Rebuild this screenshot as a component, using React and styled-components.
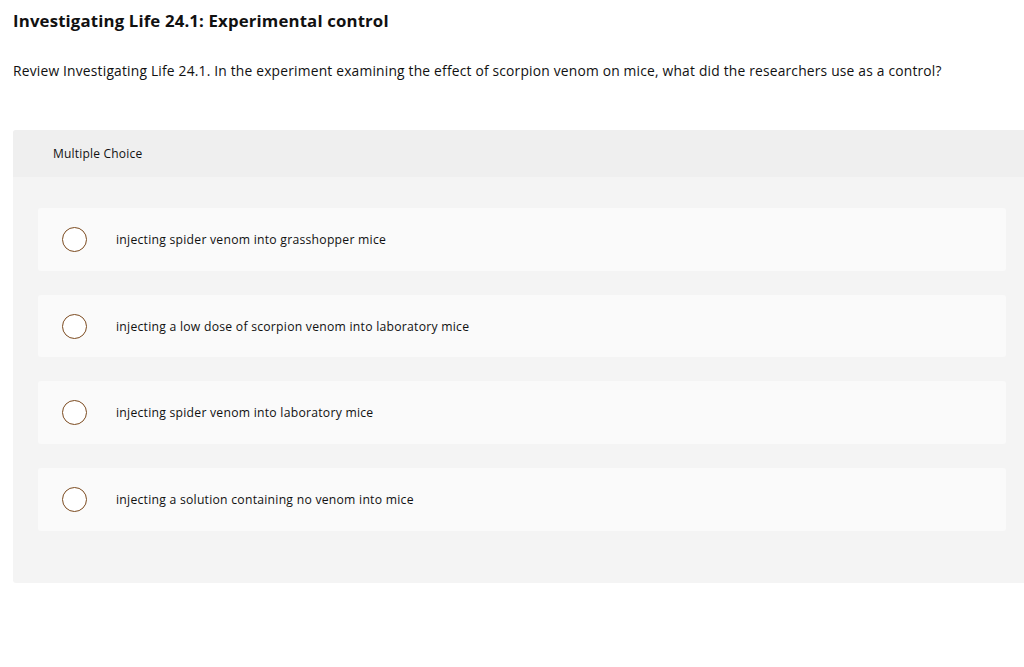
import React from "react";
import styled, { createGlobalStyle } from "styled-components";

const Global = createGlobalStyle`
  html, body { margin: 0; padding: 0; background: #fff; }
  body { font-family: "Open Sans", Lato, Arial, sans-serif; color: #111; }
`;

const Page = styled.div`
  padding: 11px 0 0 13px;
`;

const Title = styled.h1`
  margin: 0;
  font-size: 16.8px;
  font-weight: 700;
  letter-spacing: 0.15px;
  line-height: 20px;
  color: #111;
`;

const Question = styled.p`
  margin: 30px 0 0;
  font-size: 13.8px;
  letter-spacing: 0.2px;
  line-height: 20px;
  color: #111;
`;

const Panel = styled.section`
  margin-top: 49px;
  background: #f4f4f4;
  border-radius: 3px 0 0 3px;
  padding-bottom: 52px;
`;

const PanelHeader = styled.div`
  height: 47px;
  background: #efefef;
  display: flex;
  align-items: center;
  padding-left: 40px;
  font-size: 12px;
  letter-spacing: 0.2px;
  color: #111;
  border-radius: 3px 0 0 0;
`;

const Options = styled.div`
  display: flex;
  flex-direction: column;
  gap: 24px;
  padding: 31px 18px 0 25px;
`;

const Option = styled.label`
  display: flex;
  align-items: center;
  height: 62.7px;
  background: #fafafa;
  border-radius: 3px;
  padding-left: 24px;
  cursor: pointer;
`;

const Radio = styled.span`
  width: 23px;
  height: 23px;
  border-radius: 50%;
  border: 1.5px solid #7b4a1f;
  background: #fff;
  flex-shrink: 0;
`;

const OptionText = styled.span`
  margin-left: 29px;
  font-size: 12.2px;
  letter-spacing: 0.25px;
  color: #111;
`;

const options = [
  "injecting spider venom into grasshopper mice",
  "injecting a low dose of scorpion venom into laboratory mice",
  "injecting spider venom into laboratory mice",
  "injecting a solution containing no venom into mice",
];

export default function App() {
  return (
    <>
      <Global />
      <Page>
        <Title>Investigating Life 24.1: Experimental control</Title>
        <Question>
          Review Investigating Life 24.1. In the experiment examining the effect of scorpion venom on mice, what did the researchers use as a control?
        </Question>
        <Panel>
          <PanelHeader>Multiple Choice</PanelHeader>
          <Options>
            {options.map((o) => (
              <Option key={o}>
                <Radio />
                <OptionText>{o}</OptionText>
              </Option>
            ))}
          </Options>
        </Panel>
      </Page>
    </>
  );
}
